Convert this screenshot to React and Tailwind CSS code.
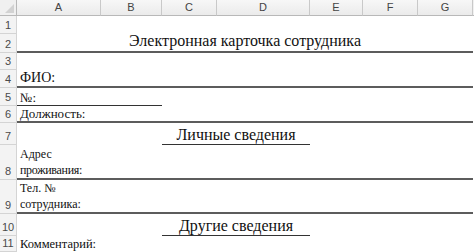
import React from "react";

const cols = ["A", "B", "C", "D", "E", "F", "G"];

const RowHead = ({ n }) => (
  <div className="flex items-end justify-center border-r border-b border-[#d4d4d4] bg-[#f3f3f3] pb-[1px] font-['Liberation_Sans',sans-serif] text-[11px] leading-[13px] text-[#4a4a4a]">
    {n}
  </div>
);

export default function App() {
  return (
    <div className="h-[252px] w-[474px] overflow-hidden bg-white font-['Liberation_Serif','DejaVu_Serif',serif]">
      <div className="grid grid-cols-[17px_84px_61px_55px_93px_53px_55px_55px_1fr] grid-rows-[16px_18px_19px_17px_18px_18px_17px_22px_35px_34px_22px_16px]">
        {/* column header */}
        <div className="relative border-r border-b border-[#b8b8b8] bg-[#f0f0f0]">
          <svg className="absolute right-[2px] bottom-[2px]" width="9" height="9" viewBox="0 0 9 9">
            <polygon points="9,0 9,9 0,9" fill="#d2d2d2" />
          </svg>
        </div>
        {cols.map((c) => (
          <div
            key={c}
            className="flex items-center justify-center border-r border-b border-[#c9c9c9] border-b-[#b8b8b8] bg-gradient-to-b from-[#f7f7f7] to-[#ebebeb] font-['Liberation_Sans',sans-serif] text-[11px] text-[#444]"
          >
            {c}
          </div>
        ))}
        <div className="border-b border-[#b8b8b8] bg-[#f0f0f0]" />

        {/* 1 */}
        <RowHead n="1" />
        <div className="col-span-8" />

        {/* 2 */}
        <RowHead n="2" />
        <div className="col-span-7 flex items-end justify-center border-b-2 border-[#5c5c5c] pb-[1px] text-[16px] leading-[18px] text-[#111]">
          Электронная карточка сотрудника
        </div>
        <div />

        {/* 3 */}
        <RowHead n="3" />
        <div className="col-span-8" />

        {/* 4 */}
        <RowHead n="4" />
        <div className="col-span-7 flex items-end border-b-2 border-[#5c5c5c] pl-[3px] text-[14px] leading-[16px] text-[#111]">
          ФИО:
        </div>
        <div />

        {/* 5 */}
        <RowHead n="5" />
        <div className="col-span-2 flex items-end border-b border-[#333] pl-[3px] text-[13px] leading-[15px] text-[#111]">
          №:
        </div>
        <div className="col-span-6" />

        {/* 6 */}
        <RowHead n="6" />
        <div className="col-span-7 flex items-end border-b-2 border-[#5c5c5c] pl-[3px] text-[13px] leading-[15px] text-[#111]">
          Должность:
        </div>
        <div />

        {/* 7 */}
        <RowHead n="7" />
        <div className="col-span-2" />
        <div className="col-span-2 flex items-end justify-center border-b border-[#333] text-[16px] leading-[18px] text-[#111]">
          Личные сведения
        </div>
        <div className="col-span-4" />

        {/* 8 */}
        <RowHead n="8" />
        <div className="col-span-7 flex flex-col justify-end border-b-2 border-[#5c5c5c] pl-[3px] text-[12px] leading-[16px] text-[#111]">
          <span>Адрес</span>
          <span className="tracking-[-0.3px]">проживания:</span>
        </div>
        <div />

        {/* 9 */}
        <RowHead n="9" />
        <div className="col-span-7 flex flex-col justify-end border-b-2 border-[#5c5c5c] pl-[3px] text-[12px] leading-[16px] text-[#111]">
          <span>Тел. №</span>
          <span>сотрудника:</span>
        </div>
        <div />

        {/* 10 */}
        <RowHead n="10" />
        <div className="col-span-2" />
        <div className="col-span-2 flex items-end justify-center border-b border-[#333] text-[16px] leading-[18px] text-[#111]">
          Другие сведения
        </div>
        <div className="col-span-4" />

        {/* 11 */}
        <RowHead n="11" />
        <div className="col-span-7 flex items-end pl-[3px] text-[12.5px] leading-[15px] text-[#111]">
          Комментарий:
        </div>
        <div />
      </div>
    </div>
  );
}
